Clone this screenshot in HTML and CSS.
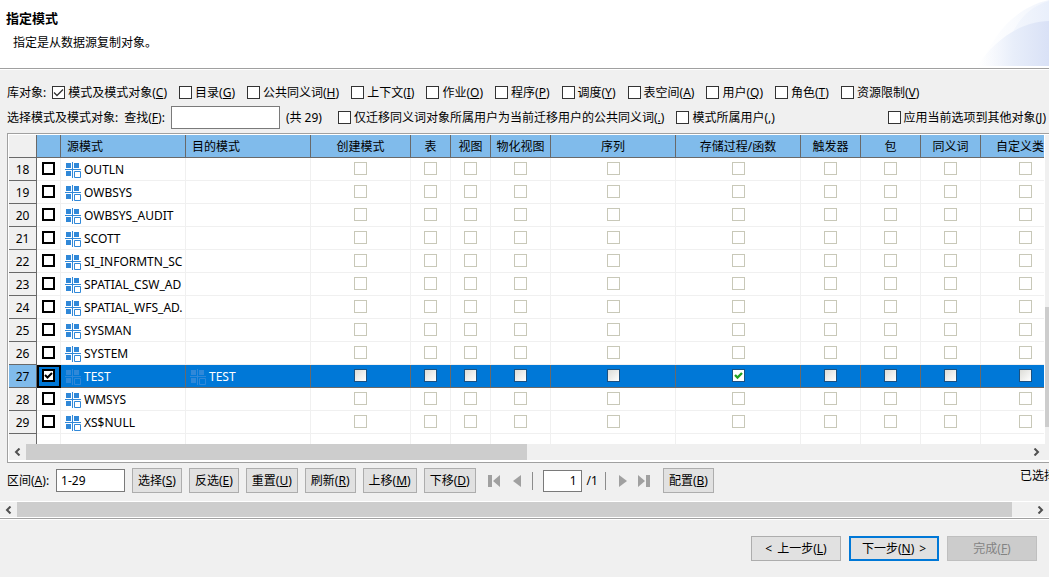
FILE: index.html
```
<!DOCTYPE html>
<html lang="zh-CN">
<head>
<meta charset="utf-8">
<title>指定模式</title>
<link rel="stylesheet" href="styles.css">
</head>
<body>
<svg class="sprite" aria-hidden="true">
  <symbol id="schema" viewBox="0 0 16 16">
    <path fill="currentColor" d="M1 1h5v5H1zM9 1h5v5H9zM1 9h5v5H1zM7 0h1v16H7zM0 7h16v1H0z"/>
    <path fill="none" stroke="currentColor" d="M9.500 9.500h6v6h-6z"/>
  </symbol>
  <symbol id="chevron-left" viewBox="0 0 8 8">
    <path fill="none" stroke="#505050" stroke-width="2" d="M6 0.500L2.500 4L6 7.500"/>
  </symbol>
  <symbol id="chevron-right" viewBox="0 0 8 8">
    <path fill="none" stroke="#505050" stroke-width="2" d="M2 0.500L5.500 4L2 7.500"/>
  </symbol>
</svg>

<header class="banner">
  <div class="banner-text">
    <h1>指定模式</h1>
    <p>指定是从数据源复制对象。</p>
  </div>
  <svg class="banner-art" viewBox="0 0 72 66" aria-hidden="true">
    <defs>
      <linearGradient id="fade-a" x1="0" x2="1"><stop offset="0" stop-color="#f4f7fd" stop-opacity="0"/><stop offset="1" stop-color="#f0f4fc"/></linearGradient>
      <linearGradient id="fade-b" x1="0" x2="1"><stop offset="0" stop-color="#f4f7fd"/><stop offset="1" stop-color="#e9effb"/></linearGradient>
      <linearGradient id="fade-c" x1="0" x2="1"><stop offset="0" stop-color="#f4f7fd" stop-opacity="0"/><stop offset="0.500" stop-color="#e8eefa"/><stop offset="1" stop-color="#d9e1f6"/></linearGradient>
    </defs>
    <path fill="url(#fade-a)" d="M4 66C14 38 36 8 72 0V66Z"/>
    <path fill="url(#fade-b)" d="M34 36C42 18 54 6 72 1V66Z"/>
    <path fill="url(#fade-c)" d="M0 66C18 40 42 22 72 21V66Z"/>
  </svg>
</header>

<main class="content">
  <div class="options">
    <span>库对象:</span>
    <label><input type="checkbox" class="box" checked>模式及模式对象(<u>C</u>)</label>
    <label><input type="checkbox" class="box">目录(<u>G</u>)</label>
    <label><input type="checkbox" class="box">公共同义词(<u>H</u>)</label>
    <label><input type="checkbox" class="box">上下文(<u>I</u>)</label>
    <label><input type="checkbox" class="box">作业(<u>O</u>)</label>
    <label><input type="checkbox" class="box">程序(<u>P</u>)</label>
    <label><input type="checkbox" class="box">调度(<u>Y</u>)</label>
    <label><input type="checkbox" class="box">表空间(<u>A</u>)</label>
    <label><input type="checkbox" class="box">用户(<u>Q</u>)</label>
    <label><input type="checkbox" class="box">角色(<u>T</u>)</label>
    <label><input type="checkbox" class="box">资源限制(<u>V</u>)</label>
  </div>
  <div class="search">
    <span>选择模式及模式对象:</span>
    <label for="find">查找(<u>F</u>):</label>
    <input type="text" id="find" class="field find">
    <span class="total">(共 29)</span>
    <label><input type="checkbox" class="box">仅迁移同义词对象所属用户为当前迁移用户的公共同义词(<u>.</u>)</label>
    <label><input type="checkbox" class="box">模式所属用户(<u>,</u>)</label>
    <label class="apply"><input type="checkbox" class="box">应用当前选项到其他对象(<u>J</u>)</label>
  </div>

  <section class="frame">
    <div class="frame-body">
      <div class="viewport">
        <table class="grid">
          <colgroup>
            <col class="w28"><col class="w24"><col class="w125"><col class="w125"><col class="w100"><col class="w40"><col class="w40"><col class="w60"><col class="w125"><col class="w125"><col class="w60"><col class="w60"><col class="w60"><col class="w90">
          </colgroup>
          <thead>
            <tr><th class="corner"></th><th></th><th class="left">源模式</th><th class="left">目的模式</th><th>创建模式</th><th>表</th><th>视图</th><th>物化视图</th><th>序列</th><th>存储过程/函数</th><th>触发器</th><th>包</th><th>同义词</th><th class="last">自定义类</th></tr>
          </thead>
          <tbody id="rows"></tbody>
        </table>
      </div>
      <div class="vscroll"><div class="vthumb"></div></div>
    </div>
    <div class="hscroll inner">
      <svg class="arrow"><use href="#chevron-left"/></svg>
      <div class="track"><div class="thumb thumb-grid"></div></div>
      <svg class="arrow"><use href="#chevron-right"/></svg>
    </div>
  </section>

  <div class="toolbar">
    <label for="range">区间(<u>A</u>):</label>
    <input type="text" id="range" class="field range" value="1-29">
    <button type="button">选择(<u>S</u>)</button>
    <button type="button">反选(<u>E</u>)</button>
    <button type="button">重置(<u>U</u>)</button>
    <button type="button">刷新(<u>R</u>)</button>
    <button type="button">上移(<u>M</u>)</button>
    <button type="button">下移(<u>D</u>)</button>
    <div class="pager">
      <button type="button" class="nav" aria-label="首页"><svg width="13" height="12"><path d="M0 0h4v12H0zM12 0v12L5 6z"/></svg></button>
      <button type="button" class="nav" aria-label="上一页"><svg width="11" height="12"><path d="M10 0v12L2 6z"/></svg></button>
      <span class="rule"></span>
      <input type="text" class="field page" value="1" aria-label="页码">
      <span>/1</span>
      <span class="rule"></span>
      <button type="button" class="nav" aria-label="下一页"><svg width="11" height="12"><path d="M3 0v12L11 6z"/></svg></button>
      <button type="button" class="nav" aria-label="末页"><svg width="13" height="12"><path d="M9 0h4v12H9zM1 0v12L8 6z"/></svg></button>
    </div>
    <button type="button">配置(<u>B</u>)</button>
    <span class="selected-count">已选择</span>
  </div>
</main>

<div class="hscroll outer">
  <svg class="arrow"><use href="#chevron-left"/></svg>
  <div class="track"><div class="thumb thumb-page"></div></div>
  <svg class="arrow"><use href="#chevron-right"/></svg>
</div>

<footer class="actions">
  <button type="button"><span>&lt;</span><span>上一步(<u>L</u>)</span></button>
  <button type="button" class="primary"><span>下一步(<u>N</u>)</span><span>&gt;</span></button>
  <button type="button" disabled><span>完成(<u>F</u>)</span></button>
</footer>
<script src="grid.js"></script>
</body>
</html>
```

FILE: styles.css
```
* { box-sizing: border-box; }

body {
  margin: 0;
  min-height: 100vh;
  overflow: hidden;
  background: #f0f0f0;
  color: #000;
  font: 12px/16px "Noto Sans", "Noto Sans CJK SC", sans-serif;
}

button, input { font: inherit; color: inherit; margin: 0; }
label, span, button { white-space: nowrap; }
u { text-underline-offset: 1px; }
.sprite { position: absolute; width: 0; height: 0; }

.banner {
  display: flex;
  justify-content: space-between;
  background: #fff;
  border-bottom: 1px solid #fff;
  box-shadow: inset 0 -1px #a0a0a0;
  padding-bottom: 3px;
}
.banner-text { padding: 10px 6px; }
.banner h1 { margin: 0 0 9px; font-size: 13px; line-height: 16px; font-weight: 700; }
.banner p { margin: 0 0 0 7px; }
.banner-art { width: 72px; height: 66px; flex: none; }

.content { overflow: hidden; padding: 14px 0 8px 7px; }
.options, .search { display: flex; align-items: center; }
.options { gap: 12px; height: 17px; }
.options > span { margin-right: -6px; }
.search { gap: 6px; height: 23px; margin: 5px 0 4px; padding-right: 3px; }
.total { margin-right: 10px; }
.search label + label { margin-left: 6px; }
.options label, .search label { display: flex; align-items: center; }
.search .apply { margin-left: auto; }

.box {
  appearance: none;
  flex: none;
  width: 13px;
  height: 13px;
  margin-right: 3px;
  border: 1px solid #333;
  background: #fff;
}
.box:checked {
  background: #fff url("data:image/svg+xml,%3Csvg xmlns='http://www.w3.org/2000/svg' viewBox='0 0 11 11'%3E%3Cpath fill='none' stroke='%23333' stroke-width='1.300' d='M1 5.500L4 8.500L10 2.500'/%3E%3C/svg%3E");
}

.field { border: 1px solid #7a7a7a; background: #fff; height: 23px; padding: 0 4px; border-radius: 0; }
.find { width: 109px; }

.frame { border: solid #a0a0a0; border-width: 1px 0 1px 1px; background: #fff; padding: 1px 0 1px 1px; }
.frame-body { display: flex; }
.viewport { flex: 1; min-width: 0; overflow: hidden; }
.vscroll { flex: none; width: 4px; margin-left: 1px; background: #f0f0f0; display: flex; align-items: flex-end; }
.vthumb { width: 100%; height: 39%; margin-bottom: 17px; background: #cdcdcd; }

.hscroll { display: flex; align-items: center; height: 17px; background: #f0f0f0; }
.arrow { flex: none; width: 17px; height: 8px; }
.track { flex: 1; align-self: stretch; display: flex; }
.thumb { background: #cdcdcd; }
.thumb-grid { width: 50%; }
.thumb-page { width: 98%; }
.hscroll.inner { padding-right: 4px; border-bottom: 1px solid #fff; }
.hscroll.outer { border: solid #fff; border-width: 1px 0; }

.grid { table-layout: fixed; border-collapse: separate; border-spacing: 0; width: 1062px; }
.w24 { width: 24px; } .w28 { width: 28px; } .w40 { width: 40px; } .w60 { width: 60px; }
.w90 { width: 90px; } .w100 { width: 100px; } .w125 { width: 125px; }
.grid th, .grid td {
  height: 23px;
  padding: 0;
  overflow: hidden;
  white-space: nowrap;
  font-weight: 400;
  text-align: center;
  vertical-align: middle;
  border: solid #f0f0f0;
  border-width: 0 1px 1px 0;
}
.grid th { padding-top: 2px; }
.grid thead th { background: #80bbeb; border-color: #696969; }
.grid thead .left { text-align: left; padding-left: 6px; }
.grid thead .last { padding-right: 11px; }
.grid thead .corner, .grid tbody th { background: #f0f0f0; border-color: #696969; }
.name { display: flex; align-items: center; gap: 3px; padding: 1px 0 0 4px; }
.name svg { flex: none; width: 16px; height: 16px; color: #3088d8; }
.grid input {
  appearance: none;
  display: block;
  width: 13px;
  height: 13px;
  margin: 0 auto 1px;
  border: 1px solid #c8c8b8;
  background: #fff;
}
.grid input.pick { border: 2px solid #000; }
.grid .current th { background: #80bbeb; }
.grid .current td { background: #0078d7; color: #fff; border-color: #696969; }
.grid .current input { border-color: #1c5180; background: linear-gradient(135deg, #dcdcd7, #fff); }
.grid .current .focus { outline: 2px solid #000; outline-offset: -2px; }
.grid .current .pick { border-color: #000; }
.grid .current .pick:checked {
  background: #fff url("data:image/svg+xml,%3Csvg xmlns='http://www.w3.org/2000/svg' viewBox='0 0 9 9'%3E%3Cpath fill='none' stroke='%23000' stroke-width='2' d='M1 4L3.500 6.500L8 2'/%3E%3C/svg%3E");
}
.grid .current .flag:checked {
  background: #fff url("data:image/svg+xml,%3Csvg xmlns='http://www.w3.org/2000/svg' viewBox='0 0 11 11'%3E%3Cpath fill='none' stroke='%2321a121' stroke-width='2.400' d='M2 5L4.500 7.500L9 3'/%3E%3C/svg%3E");
}
.grid .tail th, .grid .tail td { height: 10px; padding: 0; border-bottom: 0; }

.toolbar { display: flex; align-items: center; gap: 7px; height: 25px; margin-top: 5px; }
.toolbar > button, .actions button {
  border: 1px solid #adadad;
  background: #e1e1e1;
  height: 25px;
  padding: 0 5px;
}
.range { width: 69px; }
.pager { display: flex; align-items: center; gap: 10px; margin: 0 6px 0 5px; }
.nav { border: 0; padding: 0; background: none; height: 12px; }
.nav svg { display: block; fill: #a0a0a0; }
.rule { width: 1px; height: 18px; background: #8c8c8c; }
.page { width: 39px; height: 22px; text-align: right; }
.pager .page + span { margin: 0 -3px 0 -5px; }
.selected-count { margin-left: auto; width: 29px; overflow: hidden; align-self: flex-start; }

.actions {
  display: flex;
  justify-content: flex-end;
  gap: 8px;
  border-top: 1px solid #a0a0a0;
  box-shadow: inset 0 1px #fff;
  padding: 17px 12px 16px;
}
.actions button { display: flex; align-items: center; justify-content: center; gap: 5px; width: 90px; }
.actions .primary { border: 2px solid #0078d7; }
.actions button:disabled { background: #ccc; border-color: #bfbfbf; color: #838383; }
```

FILE: grid.js
```
const schemas = ["OUTLN", "OWBSYS", "OWBSYS_AUDIT", "SCOTT", "SI_INFORMTN_SC", "SPATIAL_CSW_AD", "SPATIAL_WFS_AD.", "SYSMAN", "SYSTEM", "TEST", "WMSYS", "XS$NULL"];
const kinds = ["创建模式", "表", "视图", "物化视图", "序列", "存储过程/函数", "触发器", "包", "同义词", "自定义类"];
const nameCell = (text) => `<div class="name"><svg><use href="#schema"/></svg><span>${text}</span></div>`;

const rows = schemas.map((schema, i) => {
  const current = schema === "TEST";
  const flags = kinds.map((kind) =>
    `<td><input type="checkbox" class="flag" aria-label="${schema} ${kind}"${current && kind === "存储过程/函数" ? " checked" : ""}></td>`).join("");
  return `<tr${current ? ' class="current"' : ""}><th>${18 + i}</th>` +
    `<td${current ? ' class="focus"' : ""}><input type="checkbox" class="pick" aria-label="${schema}"${current ? " checked" : ""}></td>` +
    `<td>${nameCell(schema)}</td><td>${current ? nameCell(schema) : ""}</td>${flags}</tr>`;
});
rows.push(`<tr class="tail"><th></th>${"<td></td>".repeat(13)}</tr>`);
document.getElementById("rows").innerHTML = rows.join("");
```
